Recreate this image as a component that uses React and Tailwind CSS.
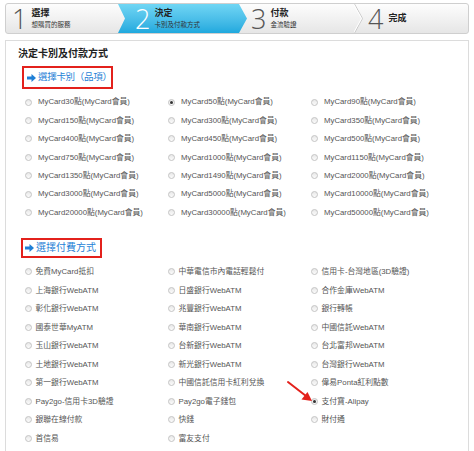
import React from "react";

const F = { fontFamily: '"Liberation Sans", "Noto Sans CJK TC", sans-serif' };

const cards = [
  ["30", "50", "90"],
  ["150", "300", "350"],
  ["400", "450", "500"],
  ["750", "1000", "1150"],
  ["1350", "1490", "2000"],
  ["3000", "5000", "10000"],
  ["20000", "30000", "50000"],
];

const pays = [
  ["免費MyCard抵扣", "中華電信市內電話輕鬆付", "信用卡-台灣地區(3D驗證)"],
  ["上海銀行WebATM", "日盛銀行WebATM", "合作金庫WebATM"],
  ["彰化銀行WebATM", "兆豐銀行WebATM", "銀行轉帳"],
  ["國泰世華MyATM", "華南銀行WebATM", "中國信託WebATM"],
  ["玉山銀行WebATM", "台新銀行WebATM", "台北富邦WebATM"],
  ["土地銀行WebATM", "新光銀行WebATM", "台灣銀行WebATM"],
  ["第一銀行WebATM", "中國信託信用卡紅利兌換", "偉易Ponta紅利點數"],
  ["Pay2go-信用卡3D驗證", "Pay2go電子錢包", "支付寶-Alipay"],
  ["銀聯在線付款", "快錢", "財付通"],
  ["首信易", "富友支付", null],
];

function Radio({ checked }) {
  return (
    <span className="w-[7px] h-[7px] rounded-full border border-[#c4c4c4] bg-gradient-to-b from-[#e8e8e8] to-[#fbfbfb] flex items-center justify-center shrink-0">
      {checked && <span className="w-[3px] h-[3px] rounded-full bg-[#333]" />}
    </span>
  );
}

function BlueArrow() {
  return (
    <svg width="9" height="8" viewBox="0 0 9 8" className="shrink-0">
      <path d="M0 2.5H4.5V0L9 4L4.5 8V5.5H0Z" fill="#1f7fd6" />
    </svg>
  );
}

function Step({ n, title, sub, active }) {
  return (
    <div className="flex items-center h-full">
      <span
        className={`text-[27px] leading-none font-light ${active ? "text-white" : "text-[#555]"}`}
        style={{ fontFamily: '"Open Sans", sans-serif' }}
      >
        {n}
      </span>
      <div className="flex flex-col ml-[4px]">
        <span className="text-[9px] leading-[11px] font-bold text-[#222]">{title}</span>
        {sub && <span className="text-[6.5px] leading-[9px] mt-[1px] text-[#333]">{sub}</span>}
      </div>
    </div>
  );
}

export default function App() {
  return (
    <div className="relative w-[474px] h-[451px] bg-white overflow-hidden" style={F}>
      {/* step header */}
      <div className="mx-[5px] mt-[3px] h-[31px] rounded-[3px] border border-[#cfcfcf] bg-gradient-to-b from-[#fdfdfd] to-[#e6e6e6] flex">
        <div className="w-[112px] pl-[6px]">
          <Step n="1" title="選擇" sub="想購買的服務" />
        </div>
        <div className="w-[129px] pl-[17px] bg-gradient-to-b from-[#6fd6f4] to-[#1ea9de] [clip-path:polygon(0_0,121px_0,100%_50%,121px_100%,0_100%,7px_50%)]">
          <Step n="2" title="決定" sub="卡別及付款方式" active />
        </div>
        <div className="w-[116px] pl-[4px] flex relative">
          <Step n="3" title="付款" sub="金流驗證" />
          <svg className="absolute right-0 top-0" width="9" height="29" viewBox="0 0 9 29">
            <path d="M0.5 0L8.5 14.5L0.5 29" fill="none" stroke="#c8c8c8" strokeWidth="1" />
            <path d="M-0.5 0L7.5 14.5L-0.5 29" fill="none" stroke="#ffffff" strokeWidth="1" />
          </svg>
        </div>
        <div className="flex-1 pl-[5px]">
          <div className="flex items-center h-full">
            <span className="text-[27px] leading-none font-light text-[#555]" style={{ fontFamily: '"Open Sans", sans-serif' }}>4</span>
            <span className="text-[9px] font-bold text-[#222] ml-[5px]">完成</span>
          </div>
        </div>
      </div>

      {/* content panel */}
      <div className="mx-[5px] mt-[6px] h-[420px] border border-[#dcdcdc] pl-[12px] pt-[7px]">
        <div className="text-[10px] leading-[12px] font-bold text-[#222]">決定卡別及付款方式</div>

        <div className="mt-[6px] ml-[4px] w-[91px] h-[23px] border-2 border-[#e3211c] flex items-center pl-[3px] gap-[2px]">
          <BlueArrow />
          <span className="text-[9.5px] text-[#1f7fd6] whitespace-nowrap tracking-[-0.3px]">選擇卡別（品項）</span>
        </div>

        <div className="mt-[4px] ml-[6px] grid grid-cols-[143px_143px_143px]">
          {cards.map((row, i) =>
            row.map((c, j) => (
              <div key={`${i}-${j}`} className="h-[18.4px] flex items-center gap-[6px] pl-[1px]">
                <Radio checked={i === 0 && j === 1} />
                <span className="text-[7.8px] text-[#555] whitespace-nowrap">
                  MyCard{c}點(MyCard會員)
                </span>
              </div>
            ))
          )}
        </div>

        <div className="mt-[16px] ml-[3px] w-[81px] h-[20px] border-2 border-[#e3211c] flex items-center pl-[2px] gap-[2px]">
          <BlueArrow />
          <span className="text-[10px] text-[#1f7fd6] whitespace-nowrap">選擇付費方式</span>
        </div>

        <div className="mt-[5px] ml-[6px] grid grid-cols-[143px_143px_143px]">
          {pays.map((row, i) =>
            row.map((c, j) => (
              <div key={`${i}-${j}`} className="h-[18.5px] flex items-center gap-[3.5px] pl-[1px]">
                {c && <Radio checked={c === "支付寶-Alipay"} />}
                {c && <span className="text-[7.8px] text-[#555] whitespace-nowrap">{c}</span>}
              </div>
            ))
          )}
        </div>
      </div>

      {/* red annotation arrow */}
      <svg className="absolute left-[285px] top-[379px]" width="30" height="26" viewBox="0 0 30 26">
        <path d="M3 3L21 17" stroke="#e3211c" strokeWidth="2" strokeLinecap="round" />
        <path d="M27 22L16.5 20.5L22.5 13Z" fill="#e3211c" />
      </svg>
    </div>
  );
}
